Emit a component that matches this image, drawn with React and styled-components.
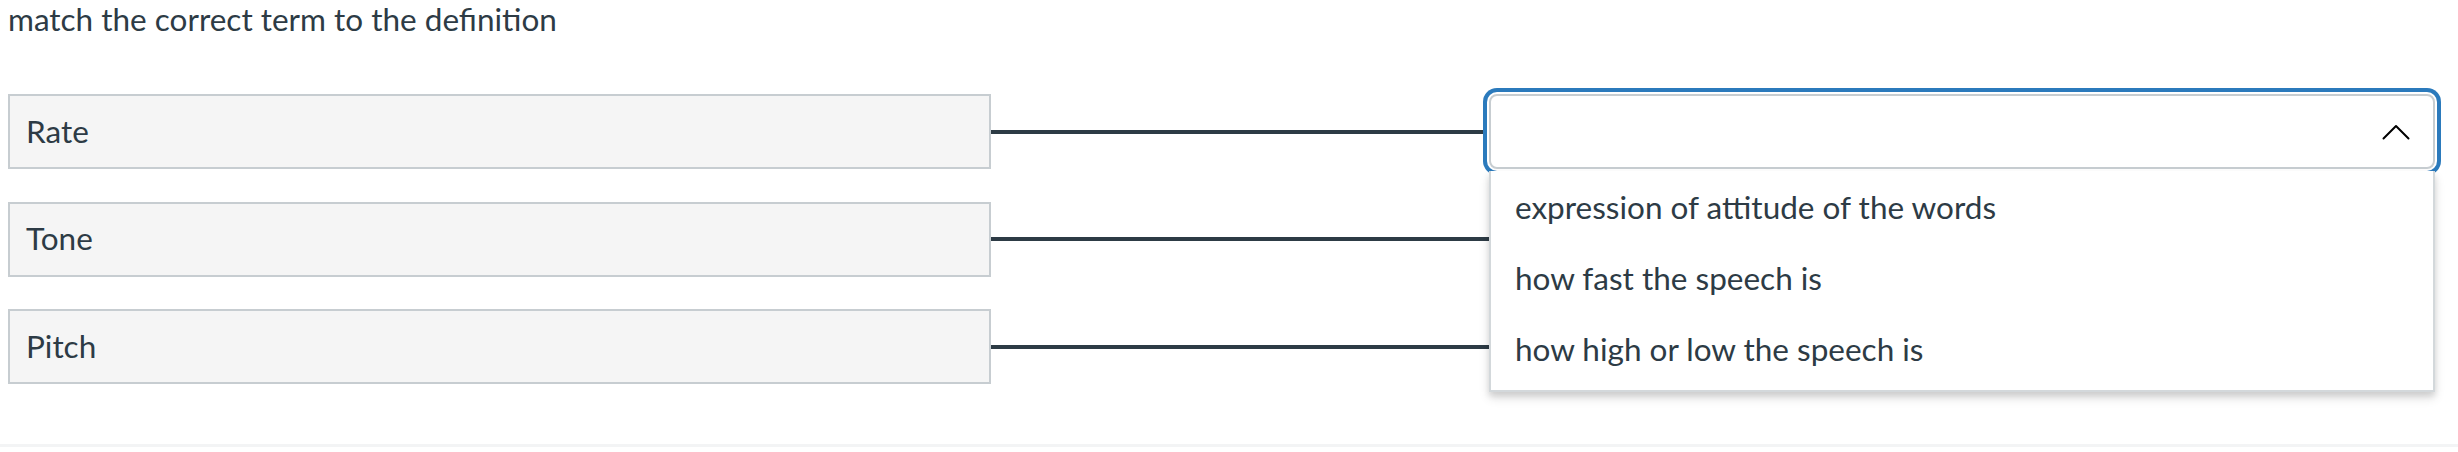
import React from "react";
import styled, { createGlobalStyle } from "styled-components";

const GlobalStyle = createGlobalStyle`
  html, body {
    margin: 0;
    padding: 0;
    background: #ffffff;
  }
  body {
    font-family: Lato, "Noto Sans", "Liberation Sans", sans-serif;
    color: #2d3b45;
  }
  * { box-sizing: border-box; }
`;

const Page = styled.div`
  width: 2458px;
  height: 452px;
  display: flex;
  flex-direction: column;
  overflow: hidden;
`;

const Title = styled.div`
  padding: 0 8px;
  font-size: 31.5px;
  line-height: 38px;
  color: #2d3b45;
`;

const Rows = styled.div`
  margin-top: 56px;
  padding: 0 23px 0 8px;
  display: grid;
  row-gap: 32.5px;
`;

const Row = styled.div`
  display: flex;
  align-items: center;
  height: 75px;
`;

const Term = styled.div`
  flex: 0 0 983px;
  height: 75px;
  display: flex;
  align-items: center;
  padding: 0 16px;
  background: #f5f5f5;
  border: 2px solid #c7cdd1;
  font-size: 31.5px;
  line-height: 1.2;
  color: #2d3b45;
`;

const Connector = styled.div`
  flex: 1 1 auto;
  height: 4px;
  background: #2d3b45;
`;

const SelectWrap = styled.div`
  flex: 0 0 946px;
  height: 75px;
  position: ${(p) => (p.$open ? "relative" : "static")};
  z-index: ${(p) => (p.$open ? 2 : "auto")};
`;

const SelectBox = styled.div`
  height: 75px;
  display: flex;
  align-items: center;
  justify-content: flex-end;
  padding-right: 23px;
  background: #ffffff;
  border: 2px solid #c7cdd1;
  border-radius: 8px;
  box-shadow: ${(p) =>
    p.$focused ? "0 0 0 2px #ffffff, 0 0 0 6px #2b7abc" : "none"};
`;

const Chevron = styled.svg`
  width: 28px;
  height: 16px;
  display: block;
`;

const Menu = styled.ul`
  position: absolute;
  top: calc(100% + 2px);
  left: 0;
  width: 946px;
  margin: 0;
  padding: 3px 0;
  list-style: none;
  background: #ffffff;
  border: 2px solid #d3d8db;
  border-top: none;
  box-shadow: 0 6px 10px rgba(0, 0, 0, 0.12), 0 4px 6px rgba(0, 0, 0, 0.1);
`;

const Option = styled.li`
  height: 71px;
  display: flex;
  align-items: center;
  padding: 0 24px 4px;
  font-size: 31.5px;
  line-height: 1.2;
  color: #2d3b45;
`;

const Footer = styled.div`
  margin-top: auto;
  margin-bottom: 5px;
  height: 3px;
  background: #f3f4f5;
`;

const terms = ["Rate", "Tone", "Pitch"];
const options = [
  "expression of attitude of the words",
  "how fast the speech is",
  "how high or low the speech is",
];

function ChevronUp() {
  return (
    <Chevron viewBox="0 0 28 16" fill="none">
      <polyline
        points="1.5,14.5 14,2 26.5,14.5"
        stroke="#000000"
        strokeWidth="2"
        strokeLinecap="round"
        strokeLinejoin="round"
      />
    </Chevron>
  );
}

function ChevronDown() {
  return (
    <Chevron viewBox="0 0 28 16" fill="none">
      <polyline
        points="1.5,1.5 14,14 26.5,1.5"
        stroke="#000000"
        strokeWidth="2"
        strokeLinecap="round"
        strokeLinejoin="round"
      />
    </Chevron>
  );
}

export default function App() {
  return (
    <>
      <GlobalStyle />
      <Page>
        <Title>match the correct term to the definition</Title>
        <Rows>
          {terms.map((t, i) => (
            <Row key={t}>
              <Term>{t}</Term>
              <Connector />
              <SelectWrap $open={i === 0}>
                <SelectBox $focused={i === 0}>
                  {i === 0 ? <ChevronUp /> : <ChevronDown />}
                </SelectBox>
                {i === 0 && (
                  <Menu>
                    {options.map((o) => (
                      <Option key={o}>{o}</Option>
                    ))}
                  </Menu>
                )}
              </SelectWrap>
            </Row>
          ))}
        </Rows>
        <Footer />
      </Page>
    </>
  );
}
